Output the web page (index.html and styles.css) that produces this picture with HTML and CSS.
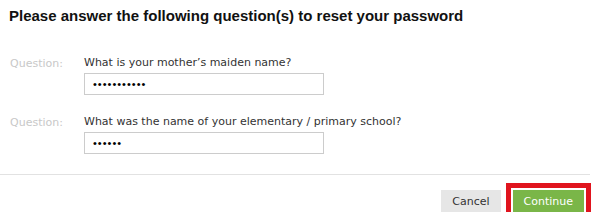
FILE: index.html
```html
<!DOCTYPE html>
<html lang="en">
<head>
    <meta charset="UTF-8">
    <title>Reset Password</title>
    <link rel="stylesheet" href="styles.css">
</head>
<body>
    <div class="dialog">
        <h1>Please answer the following question(s) to reset your password</h1>

        <div class="questions">
            <div class="question-row">
                <span class="q-label">Question:</span>
                <div class="q-body">
                    <p class="q-text">What is your mother’s maiden name?</p>
                    <input type="password" value="abcdefghijk">
                </div>
            </div>
            <div class="question-row">
                <span class="q-label">Question:</span>
                <div class="q-body">
                    <p class="q-text">What was the name of your elementary / primary school?</p>
                    <input type="password" value="abcdef">
                </div>
            </div>
        </div>

        <div class="footer">
            <button class="cancel-btn">Cancel</button>
            <button class="continue-btn">Continue</button>
        </div>
    </div>
</body>
</html>
```

FILE: styles.css
```css
body {
    margin: 0;
    background-color: #fff;
    font-family: "DejaVu Sans", Verdana, sans-serif;
    font-size: 11px;
    color: #333;
}
.dialog {
    width: 590px;
}
h1 {
    font-family: "Liberation Sans", Arial, sans-serif;
    font-size: 15px;
    font-weight: bold;
    color: #111;
    margin: 0;
    padding: 7px 0 0 9px;
    line-height: 18px;
}
.questions {
    padding: 31px 0 0 10px;
}
.question-row {
    display: flex;
    margin-bottom: 20px;
}
.q-label {
    width: 74px;
    color: #c8c8c8;
    line-height: 14px;
    padding-top: 1px;
}
.q-text {
    margin: 0 0 3px 0;
    line-height: 14px;
}
input {
    width: 230px;
    height: 20px;
    box-sizing: content-box;
    border: 1px solid #ccc;
    padding: 0 0 0 8px;
    margin: 0;
    font-size: 11px;
    letter-spacing: 1px;
}
.footer {
    border-top: 1px solid #e2e2e2;
    padding: 15px 6px 0 0;
    display: flex;
    justify-content: flex-end;
    gap: 12px;
}
button {
    border: none;
    font-family: "DejaVu Sans", Verdana, sans-serif;
    font-size: 11px;
    height: 22px;
    cursor: pointer;
}
.cancel-btn {
    background-color: #e6e6e6;
    color: #333;
    padding: 0 11px;
}
.continue-btn {
    background-color: #7ab648;
    color: #fff;
    padding: 0 11px;
    outline: 5px solid #e0141e;
    outline-offset: 2px;
}
```
